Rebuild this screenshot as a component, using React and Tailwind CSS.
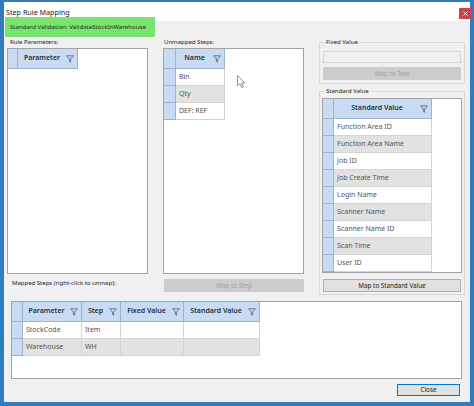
import React from "react";

const Filter = () => (
  <svg width="8" height="8" viewBox="0 0 8 8" className="shrink-0">
    <path d="M0.6 0.8H7.4L4.6 4V7.3L3.4 6.4V4Z" fill="none" stroke="#5c6d85" strokeWidth="0.9" strokeLinejoin="round" />
  </svg>
);

function HeaderCell({ w, label }) {
  return (
    <div
      className="flex items-center h-full bg-[#c9dbf2] border-r border-b border-[#9db3d2] font-semibold text-[#24303f] text-[7px]"
      style={{ width: w }}
    >
      <span className="flex-1 text-center">{label}</span>
      <span className="mr-[3px]"><Filter /></span>
    </div>
  );
}

function Grid({ rh, cols, rows, headH = 20, className = "" }) {
  return (
    <div className={"bg-white border border-[#a3a3a3] flex flex-col " + className}>
      <div className="flex" style={{ height: headH }}>
        <div className="h-full bg-[#c9dbf2] border-r border-b border-[#9db3d2]" style={{ width: rh }} />
        {cols.map((c) => (
          <HeaderCell key={c.label} w={c.w} label={c.label} />
        ))}
      </div>
      {rows.map((r, i) => (
        <div key={i} className="flex h-[17px]">
          <div className="h-full bg-[#c9dbf2] border-r border-b border-[#9db3d2]" style={{ width: rh }} />
          {cols.map((c, j) => (
            <div
              key={j}
              className={
                "h-full flex items-center pl-[3px] border-r border-b border-[#d4d4d4] text-[#555555] text-[7px] " +
                (i % 2 === 1 ? "bg-[#e2e2e2]" : "bg-white")
              }
              style={{ width: c.w }}
            >
              {r[j]}
            </div>
          ))}
        </div>
      ))}
    </div>
  );
}

function Btn({ children, disabled, className = "" }) {
  return (
    <div
      className={
        "h-[13px] flex items-center justify-center text-[6.3px] border " +
        (disabled
          ? "bg-[#cccccc] border-[#cccccc] text-[#a3a3a3] "
          : "bg-[#e1e1e1] border-[#adadad] text-[#222] ") +
        className
      }
    >
      {children}
    </div>
  );
}

export default function App() {
  return (
    <div
      className="w-[474px] h-[406px] bg-[#2f7cbf] pl-[4px] pr-[4px] pt-[2px] pb-[4px] overflow-hidden"
      style={{ fontFamily: '"Noto Sans", "Open Sans", sans-serif' }}
    >
      <div className="w-full h-full flex flex-col bg-[#f0f0f0]">
        {/* title bar */}
        <div className="h-[19px] shrink-0 bg-white flex items-start justify-between">
          <span className="ml-[2px] mt-[5px] text-[7.2px] leading-[10px] text-[#222]">Step Rule Mapping</span>
          <div className="mt-[6px] mr-[-1px] w-[12px] h-[11px] bg-[#c9444d] flex items-center justify-center">
            <svg width="5" height="5" viewBox="0 0 5 5">
              <path d="M0.5 0.5L4.5 4.5M4.5 0.5L0.5 4.5" stroke="#fff" strokeWidth="0.8" />
            </svg>
          </div>
        </div>

        {/* green label */}
        <div className="-mt-[4px] ml-[1px] w-[150px] h-[20px] bg-[#79e36f] flex items-center pl-[5px] text-[6.1px] text-[#1a2a1a] relative whitespace-nowrap">
          Standard Validation: ValidateStockInWarehouse
        </div>

        {/* main row */}
        <div className="flex h-[260px] shrink-0">
          {/* left */}
          <div className="ml-[3px] w-[141px] flex flex-col">
            <div className="h-[11px] flex items-center pl-[3px] text-[6px] text-[#222]">Rule Parameters:</div>
            <Grid rh={10} cols={[{ w: 60, label: "Parameter" }]} rows={[]} className="h-[226px]" />
            <div className="mt-[4px] pl-[5px] h-[10px] flex items-center text-[6px] text-[#222] whitespace-nowrap">
              Mapped Steps (right-click to unmap):
            </div>
          </div>

          {/* middle */}
          <div className="ml-[15px] w-[141px] flex flex-col relative">
            <div className="h-[11px] flex items-center pl-[1px] text-[6px] text-[#222]">Unmapped Steps:</div>
            <Grid
              rh={12}
              cols={[{ w: 49, label: "Name" }]}
              rows={[["Bin"], ["Qty"], ["DEF: REF"]]}
              className="h-[226px]"
            />
            <Btn disabled className="mt-[5px] ml-[1px]">Map to Step</Btn>
            <svg className="absolute left-[74px] top-[38px]" width="9" height="14" viewBox="0 0 9 14">
              <path d="M0.5 0.5V11L3 8.6L4.8 12.6L6.4 11.9L4.7 8H8Z" fill="#fff" stroke="#777" strokeWidth="0.8" strokeLinejoin="round" />
            </svg>
          </div>

          {/* right */}
          <div className="ml-[15px] w-[146px] flex flex-col">
            <div className="mt-[5px] h-[42px] border border-[#d9d9d9] relative flex flex-col">
              <span className="absolute -top-[6px] left-[5px] bg-[#f0f0f0] px-[1px] text-[6px] text-[#222] leading-[10px]">
                Fixed Value
              </span>
              <div className="mt-[8px] mx-[3px] h-[12px] bg-[#f0f0f0] border border-[#d4d4d4]" />
              <Btn disabled className="mt-[4px] mx-[3px]">Map to Text</Btn>
            </div>
            <div className="mt-[7px] h-[204px] border border-[#d9d9d9] relative flex flex-col">
              <span className="absolute -top-[6px] left-[5px] bg-[#f0f0f0] px-[1px] text-[6px] text-[#222] leading-[10px]">
                Standard Value
              </span>
              <Grid
                rh={11}
                cols={[{ w: 98, label: "Standard Value" }]}
                headH={20}
                rows={[
                  ["Function Area ID"],
                  ["Function Area Name"],
                  ["Job ID"],
                  ["Job Create Time"],
                  ["Login Name"],
                  ["Scanner Name"],
                  ["Scanner Name ID"],
                  ["Scan Time"],
                  ["User ID"],
                ]}
                className="mt-[6px] mx-[2px] h-[175px]"
              />
              <Btn className="mt-[6px] mx-[3px]">Map to Standard Value</Btn>
            </div>
          </div>
        </div>

        {/* bottom grid */}
        <Grid
          rh={11}
          cols={[
            { w: 59, label: "Parameter" },
            { w: 39, label: "Step" },
            { w: 63, label: "Fixed Value" },
            { w: 76, label: "Standard Value" },
          ]}
          rows={[
            ["StockCode", "Item", "", ""],
            ["Warehouse", "WH", "", ""],
          ]}
          className="mt-[4px] ml-[7px] w-[451px] h-[78px]"
        />

        <div className="flex justify-end mt-[5px] mr-[10px]">
          <div className="w-[63px] h-[12px] bg-[#e1e1e1] border border-[#0078d7] flex items-center justify-center text-[6.3px] text-[#222]">
            Close
          </div>
        </div>
      </div>
    </div>
  );
}
